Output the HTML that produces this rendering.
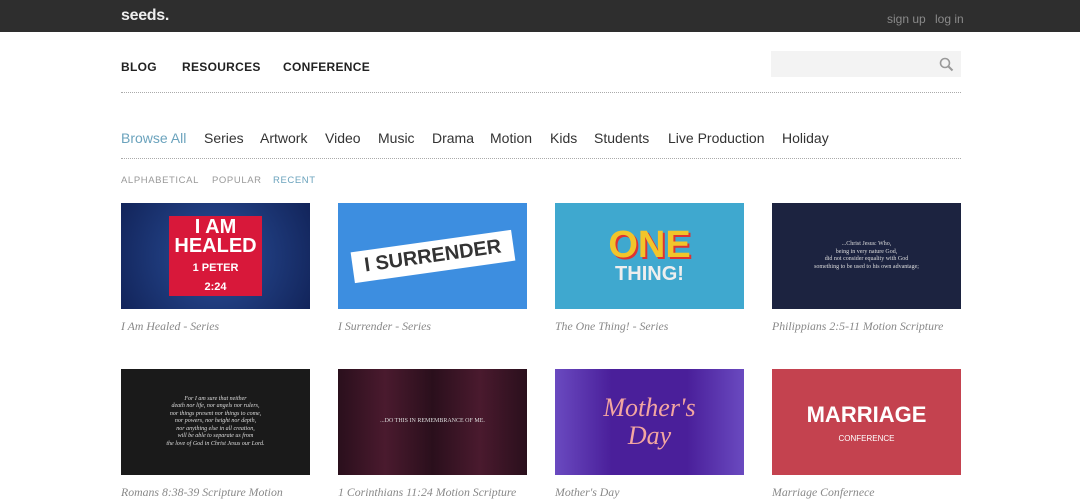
<!DOCTYPE html>
<html><head><meta charset="utf-8"><style>
*{margin:0;padding:0;box-sizing:border-box}
body{width:1080px;height:504px;overflow:hidden;background:#fff;font-family:"Liberation Sans",sans-serif;position:relative}
.top{position:absolute;left:0;top:0;width:1080px;height:32px;background:#2e2e2e}
.logo{position:absolute;left:121px;top:7px;color:#eee;font-weight:bold;font-size:16px;letter-spacing:-0.3px}
.su{position:absolute;top:12px;color:#8a8a8a;font-size:12px}
.nav{position:absolute;top:60px;font-weight:bold;font-size:12px;color:#222;letter-spacing:0.3px}
.search{position:absolute;left:771px;top:51px;width:190px;height:26px;background:#f3f3f3}
.dot{position:absolute;left:121px;width:840px;border-top:1px dotted #aaa}
.cat{position:absolute;top:130px;font-size:14px;color:#333}
.sort{position:absolute;top:175px;font-size:9.5px;letter-spacing:0.6px;color:#999}
.th{position:absolute;width:189px;height:106px;overflow:hidden;display:flex;align-items:center;justify-content:center;flex-direction:column;text-align:center}
.cap{position:absolute;font-family:"Liberation Serif",serif;font-style:italic;font-size:11.8px;color:#888}
.sm{font-family:"Liberation Serif",serif;color:#ddd;font-size:6px;line-height:7.5px}
</style></head><body>
<div class="top"></div>
<div class="logo">seeds.</div>
<div class="su" style="left:887px">sign up</div>
<div class="su" style="left:935px">log in</div>
<div class="nav" style="left:121px">BLOG</div>
<div class="nav" style="left:182px">RESOURCES</div>
<div class="nav" style="left:283px">CONFERENCE</div>
<div class="search"><svg style="position:absolute;left:168px;top:6px" width="15" height="15" viewBox="0 0 15 15"><circle cx="6" cy="6" r="4.5" fill="none" stroke="#999" stroke-width="1.6"/><path d="M9.5 9.5l4 4" stroke="#999" stroke-width="2"/></svg></div>
<div class="dot" style="top:92px"></div>
<div class="cat" style="left:121px;color:#6ba3bd">Browse All</div>
<div class="cat" style="left:204px">Series</div>
<div class="cat" style="left:260px">Artwork</div>
<div class="cat" style="left:325px">Video</div>
<div class="cat" style="left:378px">Music</div>
<div class="cat" style="left:432px">Drama</div>
<div class="cat" style="left:490px">Motion</div>
<div class="cat" style="left:550px">Kids</div>
<div class="cat" style="left:594px">Students</div>
<div class="cat" style="left:668px">Live Production</div>
<div class="cat" style="left:782px">Holiday</div>
<div class="dot" style="top:158px"></div>
<div class="sort" style="left:121px">ALPHABETICAL</div>
<div class="sort" style="left:212px">POPULAR</div>
<div class="sort" style="left:273px;color:#6ba3bd">RECENT</div>

<div class="th" style="left:121px;top:203px;background:radial-gradient(circle,#2a4f9a,#12245a)"><div style="background:#d8183a;color:#fff;font-weight:bold;font-size:20px;line-height:19px;padding:2px 5px">I AM<br>HEALED<br><span style="font-size:11px;line-height:11px">1 PETER<br>2:24</span></div></div>
<div class="th" style="left:338px;top:203px;background:#3d8ee0"><div style="background:#fff;color:#333;font-size:20px;padding:4px 12px;transform:rotate(-8deg);font-weight:bold">I SURRENDER</div></div>
<div class="th" style="left:555px;top:203px;background:#3fa8cf"><div style="color:#f2c52b;font-weight:bold;font-size:38px;line-height:36px;text-shadow:2px 2px #d33">ONE</div><div style="color:#eee;font-size:20px;font-weight:bold">THING!</div></div>
<div class="th" style="left:772px;top:203px;background:#1c2340"><div class="sm">...Christ Jesus: Who,<br>being in very nature God,<br>did not consider equality with God<br>something to be used to his own advantage;</div></div>

<div class="th" style="left:121px;top:369px;background:#1a1a1a"><div class="sm" style="font-style:italic">For I am sure that neither<br>death nor life, nor angels nor rulers,<br>nor things present nor things to come,<br>nor powers, nor height nor depth,<br>nor anything else in all creation,<br>will be able to separate us from<br>the love of God in Christ Jesus our Lord.</div></div>
<div class="th" style="left:338px;top:369px;background:linear-gradient(90deg,#2a0f1c,#4a1a2e,#2a0f1c,#4a1a2e,#2a0f1c)"><div class="sm">...DO THIS IN REMEMBRANCE OF ME.</div></div>
<div class="th" style="left:555px;top:369px;background:linear-gradient(90deg,#6a4ac0,#4a1f9a 30%,#4a1f9a 70%,#6a4ac0)"><div style="color:#f3a6a0;font-family:'Liberation Serif',serif;font-style:italic;font-size:26px;line-height:28px">Mother's<br>Day</div></div>
<div class="th" style="left:772px;top:369px;background:#c4424f"><div style="color:#fff;font-weight:bold;font-size:22px">MARRIAGE</div><div style="color:#fff;font-size:8px;margin-top:6px">CONFERENCE</div></div>

<div class="cap" style="left:121px;top:319px">I Am Healed - Series</div>
<div class="cap" style="left:338px;top:319px">I Surrender - Series</div>
<div class="cap" style="left:555px;top:319px">The One Thing! - Series</div>
<div class="cap" style="left:772px;top:319px">Philippians 2:5-11 Motion Scripture</div>
<div class="cap" style="left:121px;top:485px">Romans 8:38-39 Scripture Motion</div>
<div class="cap" style="left:338px;top:485px">1 Corinthians 11:24 Motion Scripture</div>
<div class="cap" style="left:555px;top:485px">Mother's Day</div>
<div class="cap" style="left:772px;top:485px">Marriage Confernece</div>
</body></html>
